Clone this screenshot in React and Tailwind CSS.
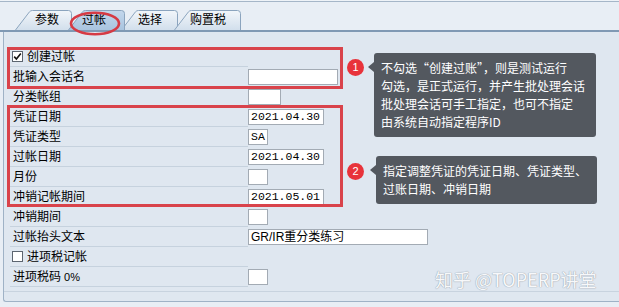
import React from 'react';

const tabs = [
  { label: '参数', w: 57, pl: 20 },
  { label: '过帐', w: 57, pl: 14, active: true },
  { label: '选择', w: 57, pl: 17 },
  { label: '购置税', w: 67, pl: 16 },
];

const rows = [
  { check: true, checked: true, label: '创建过帐' },
  { label: '批输入会话名', w: 90 },
  { label: '分类帐组', w: 33 },
  { label: '凭证日期', w: 76, value: '2021.04.30' },
  { label: '凭证类型', w: 20, value: 'SA' },
  { label: '过帐日期', w: 76, value: '2021.04.30' },
  { label: '月份', w: 20 },
  { label: '冲销记帐期间', w: 76, value: '2021.05.01' },
  { label: '冲销期间', w: 20 },
  { label: '过帐抬头文本', w: 180, value: 'GR/IR重分类练习', sans: true },
  { check: true, label: '进项税记帐' },
  { label: '进项税码', suffix: '0%', w: 20 },
];

function Tab({ tab, index }) {
  const { w, active } = tab;
  const d = `M0.5,20 L14.5,1.8 Q15.6,0.5 17.5,0.5 L${w - 3.5},0.5 Q${w - 0.5},0.5 ${w - 0.5},3.5 L${w - 0.5},20`;
  return (
    <div
      className={`relative h-[20px] shrink-0 ${index > 0 ? '-ml-[4px]' : ''}`}
      style={{ width: w, zIndex: active ? 10 : index + 1 }}
    >
      <svg className="absolute inset-0" width={w} height="20" viewBox={`0 0 ${w} 20`}>
        <defs>
          <linearGradient id={`tg${index}`} x1="0" y1="0" x2="0" y2="1">
            <stop offset="0" stopColor={active ? '#c3d7ec' : '#f2f6fa'} />
            <stop offset="1" stopColor={active ? '#a9c4df' : '#d2dfec'} />
          </linearGradient>
        </defs>
        <path d={d} fill={`url(#tg${index})`} stroke="#8ba4be" strokeWidth="1" />
      </svg>
      <div
        className="relative h-full flex items-center text-[12px] leading-none text-black"
        style={{ paddingLeft: tab.pl }}
      >
        {tab.label}
      </div>
    </div>
  );
}

function CheckBox({ checked }) {
  return (
    <div className="w-[11px] h-[11px] bg-white border border-[#5c6570] flex items-center justify-center shrink-0">
      {checked && (
        <svg width="9" height="9" viewBox="0 0 9 9">
          <path d="M1.2,4.6 L3.4,7 L7.8,1.6" fill="none" stroke="#111" strokeWidth="1.6" />
        </svg>
      )}
    </div>
  );
}

function Row({ row }) {
  return (
    <div className="flex h-[20px]">
      <div className="w-[238px] shrink-0 border-b border-[#c6d2de] flex items-center pl-[2px]">
        {row.check ? (
          <div className="flex items-center gap-[4px]">
            <CheckBox checked={row.checked} />
            <span className="leading-none">{row.label}</span>
          </div>
        ) : (
          <span className="leading-none pl-[1px]">
            {row.label}
            {row.suffix && <span className="text-[11px] ml-[3px]">{row.suffix}</span>}
          </span>
        )}
      </div>
      {row.w && (
        <div className="flex items-center">
          <div
            className={`h-[16px] bg-white border border-[#a3abb4] flex items-center px-[2px] leading-none text-black ${
              row.sans ? 'text-[12px]' : "text-[11.5px] font-['Liberation_Mono',monospace]"
            }`}
            style={{ width: row.w }}
          >
            {row.value}
          </div>
        </div>
      )}
    </div>
  );
}

function Note({ n, top, left, right, children, circleTop }) {
  return (
    <>
      <div
        className="absolute w-[17px] h-[17px] rounded-full bg-[#e8333b] text-white text-[11px] leading-none flex items-center justify-center font-['Liberation_Sans',sans-serif]"
        style={{ left: 347, top: circleTop }}
      >
        {n}
      </div>
      <div
        className="absolute bg-[#53585f] rounded-[3px] text-white text-[12px] leading-[18px] pl-[7px] pr-[4px] pt-[6px] pb-[6px] font-['Noto_Sans_CJK_SC',sans-serif]"
        style={{ top, left, width: right - left }}
      >
        <div className="absolute -left-[6px] top-[9px] w-0 h-0 border-y-[5px] border-y-transparent border-r-[6px] border-r-[#53585f]" />
        {children}
      </div>
    </>
  );
}

export default function App() {
  return (
    <div className="relative w-[619px] h-[307px] overflow-hidden bg-[#e8eef5] text-[12px] text-black font-['Liberation_Sans','Noto_Sans_CJK_SC',sans-serif]">
      <div className="h-[2px] border-b border-[#a5b6c8] bg-[#eef3f8]" />
      <div className="h-[30px] flex items-end pl-[15px] border-b-2 border-[#8099b4]">
        {tabs.map((t, i) => (
          <Tab key={t.label} tab={t} index={i} />
        ))}
      </div>
      <div className="ml-[3px] h-[270px] border-l border-b border-[#9fb2c6] rounded-bl-[3px] bg-[#dfe7f0] pt-[15px] pl-[6px]">
        {rows.map((r) => (
          <Row key={r.label} row={r} />
        ))}
        <div className="mt-[4px] -ml-[6px] border-b border-[#c8d3df]" />
      </div>

      {/* tab highlight */}
      <svg className="absolute z-20 left-[68px] top-[10px]" width="56" height="28" viewBox="0 0 56 28">
        <ellipse cx="27" cy="13.5" rx="24" ry="10.8" fill="none" stroke="#d63a44" strokeWidth="2.6" />
      </svg>

      {/* red frames */}
      <div className="absolute left-[7px] top-[47px] w-[336px] h-[42px] border-[3px] border-[#d9434b]" />
      <div className="absolute left-[7px] top-[105px] w-[336px] h-[102px] border-[3px] border-[#d9434b]" />

      <Note n="1" circleTop={59} top={53} left={374} right={596}>
        <div>不勾选“创建过账”，则是测试运行</div>
        <div>勾选，是正式运行，并产生批处理会话</div>
        <div>批处理会话可手工指定，也可不指定</div>
        <div>由系统自动指定程序ID</div>
      </Note>
      <Note n="2" circleTop={163} top={156} left={376} right={597}>
        <div>指定调整凭证的凭证日期、凭证类型、</div>
        <div>过账日期、冲销日期</div>
      </Note>

      <div className="absolute left-[435px] top-[268px] text-[18px] leading-[22px] text-[#f7f8fa] [text-shadow:0_0_1px_#9aa3ad,0_0_1px_#9aa3ad] font-['Noto_Sans_CJK_SC',sans-serif]">
        知乎 @TOPERP讲堂
      </div>
    </div>
  );
}
